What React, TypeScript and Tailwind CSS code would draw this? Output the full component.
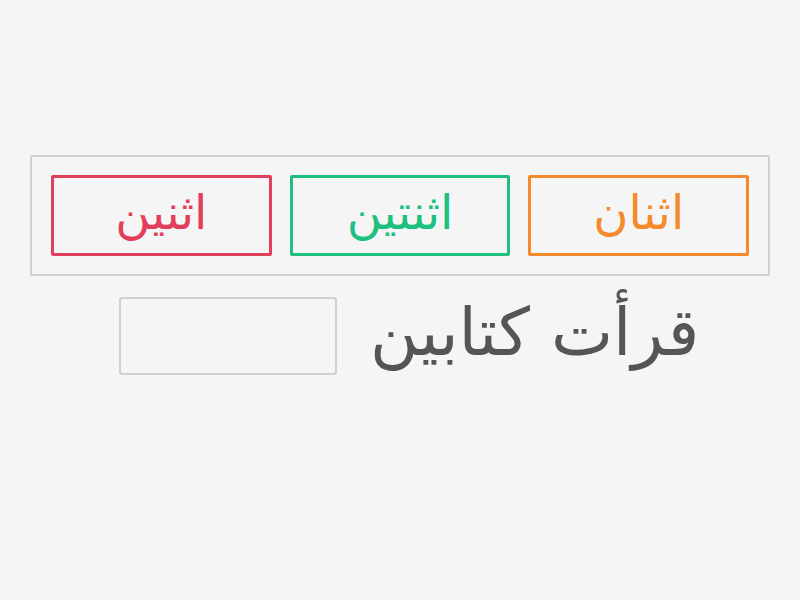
import React from "react";

export default function App() {
  const items = [
    { t: "اثنين", c: "border-[#e2405a] text-[#e2405a]" },
    { t: "اثنتين", c: "border-[#1dc07f] text-[#1dc07f]" },
    { t: "اثنان", c: "border-[#f58a2d] text-[#f58a2d]" },
  ];
  return (
    <div
      className="w-[800px] h-[600px] bg-[#f5f5f6] pt-[155px] px-[30px]"
      style={{ fontFamily: '"DejaVu Sans", "Noto Sans", sans-serif' }}
    >
      <div className="h-[121px] border-2 border-[#d0d0d2] rounded-[2px] flex items-center gap-[18px] px-[19px]">
        {items.map((it) => (
          <div
            key={it.t}
            className={`w-[221px] h-[81px] border-[3px] rounded-[2px] flex items-center justify-center text-[48px] leading-none pb-[8px] ${it.c}`}
            dir="rtl"
          >
            {it.t}
          </div>
        ))}
      </div>
      <div className="flex items-center mt-[21px] ml-[89px]">
        <div className="w-[218px] h-[78px] border-2 border-[#cfcfd1] rounded-[3px]" />
        <div
          className="ml-[33px] text-[66px] leading-none text-[#555555] pb-[6px]"
          dir="rtl"
        >
          قرأت كتابين
        </div>
      </div>
    </div>
  );
}
